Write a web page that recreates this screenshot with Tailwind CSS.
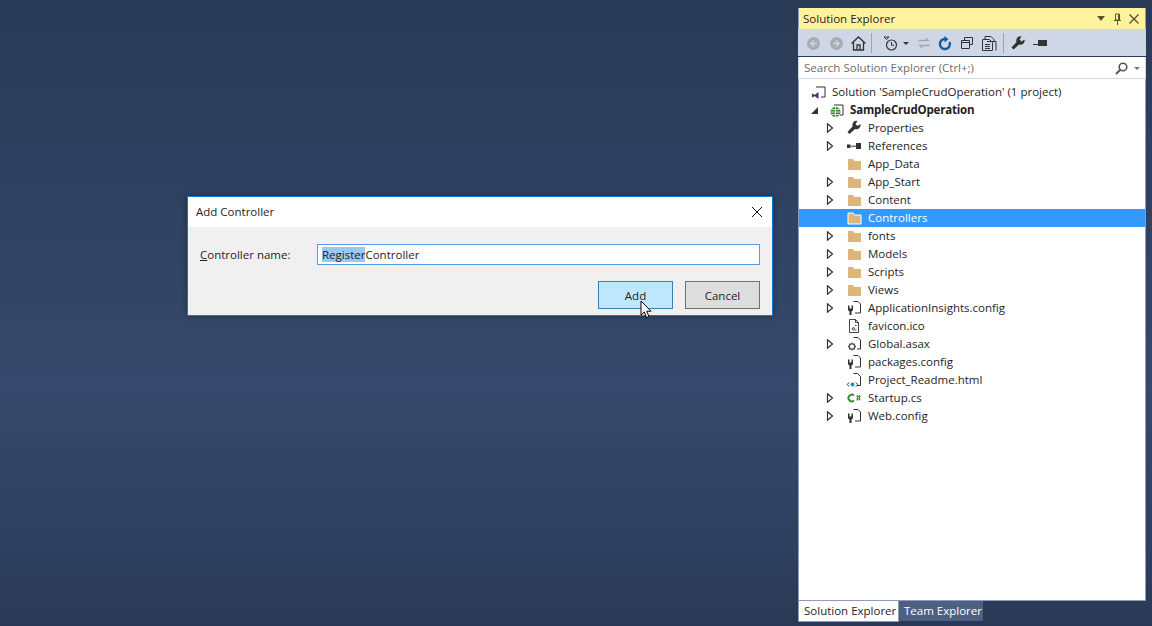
<!DOCTYPE html>
<html lang="en">
<head>
  <meta charset="UTF-8" />
  <title>Add Controller</title>
  <script src="https://cdn.jsdelivr.net/npm/@tailwindcss/browser@4"></script>
</head>
<body class="w-[1152px] h-[626px] overflow-hidden bg-[linear-gradient(to_bottom,#293a56_0%,#36496c_62%,#2f4161_85%,#293955_100%)] font-['Open_Sans',sans-serif] text-[11.5px] text-[#1e1e1e]">

<svg class="hidden">
  <symbol id="arrow" viewBox="0 0 8 10"><path d="M1.500 .8 6.500 5 1.500 9.200z" fill="#fff" stroke="#333" stroke-width="1.200"/></symbol>
  <symbol id="folder" viewBox="0 0 16 16"><path d="M2 3h5l1.500 2H15v9H2z" fill="#dcb67a"/></symbol>
  <symbol id="config" viewBox="0 0 16 16">
    <path d="M7.500 1.500h4.500l2.500 2.500v9H9" fill="none" stroke="#333"/>
    <path d="M2 5.500h1.500v3h2v-3H7v4a2 2 0 0 1-1.500 2V15h-2v-3.500A2 2 0 0 1 2 9.500z" fill="#333"/>
  </symbol>
</svg>

<div class="flex items-start">
  <!-- workspace -->
  <main class="w-[798px] pt-[196px] pl-[187px]">
    <div class="relative w-[586px] h-[120px] border border-[#0a7ad1] bg-[#f0f0f0] shadow-[0_0_6px_rgba(0,0,0,0.35)]">
      <div class="h-[30px] bg-white flex items-center justify-between pl-[8px] pr-[9px]">
        <span>Add Controller</span>
        <svg class="w-[12px] h-[12px]" viewBox="0 0 12 12"><path d="M1 1l10 10M11 1 1 11" stroke="#111" fill="none"/></svg>
      </div>
      <div class="flex items-center mt-[17px] pl-[12px]">
        <label class="w-[117px]"><span class="underline">C</span>ontroller name:</label>
        <div class="w-[443px] h-[21px] border border-[#569de5] bg-white flex items-center pl-[4px] leading-[15px]">
          <span class="bg-[#9bc8ef]">Register</span><span>Controller</span>
        </div>
      </div>
      <div class="flex justify-end gap-[12px] mt-[16px] pr-[12px]">
        <button class="w-[75px] h-[28px] pt-px border border-[#3c7fb1] bg-[#bee6fd]">Add</button>
        <button class="w-[75px] h-[28px] pt-px border border-[#707070] bg-[#dddddd]">Cancel</button>
      </div>
      <svg class="absolute left-[452px] top-[103px] w-[13px] h-[19px]" viewBox="0 0 13 19"><path d="M1 1v14l3.300-3 2.200 5.500 2.500-1-2.300-5.300H11z" fill="#fff" stroke="#000"/></svg>
    </div>
  </main>

  <!-- solution explorer -->
  <aside class="w-[348px] mt-[8px]">
    <div class="h-[21px] bg-[#fff29d] flex items-center pl-[4px] border-x border-[#8e9bbc]">
      <span class="flex-1">Solution Explorer</span>
      <svg class="w-[8px] h-[5px] mr-[8px]" viewBox="0 0 8 5"><path d="M0 0h8L4 5z" fill="#5a5430"/></svg>
      <svg class="w-[9px] h-[12px] mr-[7px]" viewBox="0 0 9 12"><path d="M2.500 1h4v6h-4zM1 7.500h7M4.500 8v4M5.500 1.500v5" stroke="#5a5430" fill="none"/></svg>
      <svg class="w-[10px] h-[10px] mr-[6px]" viewBox="0 0 10 10"><path d="M.5.500l9 9M9.500.500l-9 9" stroke="#5a5430" stroke-width="1.400" fill="none"/></svg>
    </div>
    <div class="h-[27px] pt-px bg-[#cfd6e5] flex items-center pl-[9px]">
      <svg class="w-[13px] h-[13px] mr-[10px]" viewBox="0 0 13 13"><circle cx="6.500" cy="6.500" r="6.500" fill="#a9acb1"/><path d="M7 3.500 4 6.500l3 3M4.500 6.500H10" stroke="#cfd6e5" stroke-width="1.500" fill="none"/></svg>
      <svg class="w-[13px] h-[13px] mr-[8px]" viewBox="0 0 13 13"><circle cx="6.500" cy="6.500" r="6.500" fill="#a9acb1"/><path d="M6 3.500l3 3-3 3M8.500 6.500H3" stroke="#cfd6e5" stroke-width="1.500" fill="none"/></svg>
      <svg class="w-[15px] h-[15px] mr-[5px]" viewBox="0 0 15 15"><path d="M.5 7.500 7.500 1l7 6.500M2.500 6.500v7.500h10V6.500M6 14V9h3v5" stroke="#333" stroke-width="1.300" fill="none"/></svg>
      <span class="w-px h-[20px] bg-[#9aa3b8] mr-[11px]"></span>
      <svg class="w-[15px] h-[15px] mr-[5px]" viewBox="0 0 15 15"><circle cx="8.500" cy="9" r="5" fill="none" stroke="#333" stroke-width="1.200"/><path d="M8.500 6v3.300h2.500M1 1h5L3.500 3.500z" fill="none" stroke="#333"/></svg>
      <svg class="w-[6px] h-[3px] mr-[9px]" viewBox="0 0 6 3"><path d="M0 0h6L3 3z" fill="#333"/></svg>
      <svg class="w-[12px] h-[12px] mr-[8px]" viewBox="0 0 12 12"><path d="M.5 3.500H10L7.500 1M11.500 8.500H2L4.500 11" stroke="#a3a7ad" stroke-width="1.400" fill="none"/></svg>
      <svg class="w-[14px] h-[15px] mr-[9px]" viewBox="0 0 14 15"><path d="M11.500 6A5 5 0 1 1 7 3" stroke="#0d5ea6" stroke-width="2.400" fill="none"/><path d="M6.500 0v6.500l4-3.200z" fill="#0d5ea6"/></svg>
      <svg class="w-[12px] h-[12px] mr-[9px]" viewBox="0 0 12 12"><path d="M3.500 3V.5h8v7H9M.5 3.500h8v8h-8zM.5 5.500h8" stroke="#333" fill="none"/></svg>
      <svg class="w-[15px] h-[15px] mr-[6px]" viewBox="0 0 15 15"><path d="M3 3V.5h6l3 3V5M.5 3.500h7l3 3v8h-10zM5 5.500h9v9M3 8.500h5M3 10.500h5M3 12.500h5" stroke="#333" fill="none"/></svg>
      <span class="w-px h-[20px] bg-[#9aa3b8] mr-[7px]"></span>
      <svg class="w-[14px] h-[14px] mr-[8px]" viewBox="0 0 14 14"><path d="M13.500 3.500 10.500 5.500 8.500 3.500l2-3A4.200 4.200 0 0 0 5.500 6L.5 11.500 2.500 13.500 8 8.500a4.200 4.200 0 0 0 5.500-5z" fill="#333"/></svg>
      <svg class="w-[14px] h-[6px]" viewBox="0 0 14 6"><path d="M0 4.500h5" stroke="#333" fill="none"/><path d="M5 0h9v6H5z" fill="#333"/></svg>
    </div>
    <div class="h-[22px] mt-px pt-px bg-white border-x border-b border-[#cfd6e5] flex items-center pl-[5px] text-[#6d6d6d]">
      <span class="flex-1">Search Solution Explorer (Ctrl+;)</span>
      <svg class="w-[13px] h-[13px] mr-[6px]" viewBox="0 0 13 13"><circle cx="8" cy="5" r="3.800" fill="none" stroke="#555" stroke-width="1.600"/><path d="M5.500 7.500 1 12" stroke="#555" stroke-width="2"/></svg>
      <svg class="w-[6px] h-[3px] mr-[5px]" viewBox="0 0 6 3"><path d="M0 0h6L3 3z" fill="#777"/></svg>
    </div>

    <div class="h-[522px] bg-white border border-[#8e9bbc] border-t-0 pt-[4px]">
      <div class="flex h-[18px] items-center pl-[12px]">
        <svg class="w-[16px] h-[16px]" viewBox="0 0 16 16"><path d="M5 3h9v10h-4" fill="none" stroke="#333"/><path d="M2 9.500l1.500 1.500L7.500 8v7l-4-3L2 13.500 1 13v-3z" fill="#68217a"/></svg>
        <span class="ml-[5px]">Solution 'SampleCrudOperation' (1 project)</span>
      </div>
      <div class="flex h-[18px] items-center pl-[12px]">
        <svg class="w-[7px] h-[7px]" viewBox="0 0 7 7"><path d="M7 0v7H0z" fill="#333"/></svg>
        <svg class="w-[16px] h-[16px] ml-[11px]" viewBox="0 0 16 16"><path d="M5 3h9v10h-3" fill="none" stroke="#333"/><circle cx="6.500" cy="10" r="5" fill="#388a34"/><path d="M1.500 10h10M6.500 5v10M2.500 7.500h8M2.500 12.500h8" stroke="#fff" stroke-width=".8"/></svg>
        <span class="ml-[5px] font-bold tracking-[-0.2px]">SampleCrudOperation</span>
      </div>
      <div class="flex h-[18px] items-center pl-[27px]">
        <svg class="w-[8px] h-[10px]"><use href="#arrow"/></svg>
        <svg class="w-[16px] h-[16px] ml-[12px]" viewBox="0 0 16 16"><path d="M14.500 4 11.500 6 9.500 4l2-3A4.200 4.200 0 0 0 6.500 6.500L1.500 12l2 2L9 9a4.200 4.200 0 0 0 5.500-5z" fill="#333"/></svg>
        <span class="ml-[6px]">Properties</span>
      </div>
      <div class="flex h-[18px] items-center pl-[27px]">
        <svg class="w-[8px] h-[10px]"><use href="#arrow"/></svg>
        <svg class="w-[16px] h-[16px] ml-[12px]" viewBox="0 0 16 16"><path d="M1 6.500h3.500v3.500H1zM10 5h5v6h-5z" fill="#333"/><path d="M5 8.200h5" stroke="#333"/></svg>
        <span class="ml-[6px]">References</span>
      </div>
      <div class="flex h-[18px] items-center pl-[47px]">
        <svg class="w-[16px] h-[16px]"><use href="#folder"/></svg>
        <span class="ml-[6px]">App_Data</span>
      </div>
      <div class="flex h-[18px] items-center pl-[27px]">
        <svg class="w-[8px] h-[10px]"><use href="#arrow"/></svg>
        <svg class="w-[16px] h-[16px] ml-[12px]"><use href="#folder"/></svg>
        <span class="ml-[6px]">App_Start</span>
      </div>
      <div class="flex h-[18px] items-center pl-[27px]">
        <svg class="w-[8px] h-[10px]"><use href="#arrow"/></svg>
        <svg class="w-[16px] h-[16px] ml-[12px]"><use href="#folder"/></svg>
        <span class="ml-[6px]">Content</span>
      </div>
      <div class="flex h-[18px] items-center pl-[47px] bg-[#3399ff] text-white">
        <svg class="w-[16px] h-[16px]" viewBox="0 0 16 16"><path d="M2 3h5l1.500 2H15v9H2z" fill="#dcb67a" stroke="#fff"/></svg>
        <span class="ml-[6px]">Controllers</span>
      </div>
      <div class="flex h-[18px] items-center pl-[27px]">
        <svg class="w-[8px] h-[10px]"><use href="#arrow"/></svg>
        <svg class="w-[16px] h-[16px] ml-[12px]"><use href="#folder"/></svg>
        <span class="ml-[6px]">fonts</span>
      </div>
      <div class="flex h-[18px] items-center pl-[27px]">
        <svg class="w-[8px] h-[10px]"><use href="#arrow"/></svg>
        <svg class="w-[16px] h-[16px] ml-[12px]"><use href="#folder"/></svg>
        <span class="ml-[6px]">Models</span>
      </div>
      <div class="flex h-[18px] items-center pl-[27px]">
        <svg class="w-[8px] h-[10px]"><use href="#arrow"/></svg>
        <svg class="w-[16px] h-[16px] ml-[12px]"><use href="#folder"/></svg>
        <span class="ml-[6px]">Scripts</span>
      </div>
      <div class="flex h-[18px] items-center pl-[27px]">
        <svg class="w-[8px] h-[10px]"><use href="#arrow"/></svg>
        <svg class="w-[16px] h-[16px] ml-[12px]"><use href="#folder"/></svg>
        <span class="ml-[6px]">Views</span>
      </div>
      <div class="flex h-[18px] items-center pl-[27px]">
        <svg class="w-[8px] h-[10px]"><use href="#arrow"/></svg>
        <svg class="w-[16px] h-[16px] ml-[12px]"><use href="#config"/></svg>
        <span class="ml-[6px]">ApplicationInsights.config</span>
      </div>
      <div class="flex h-[18px] items-center pl-[47px]">
        <svg class="w-[16px] h-[16px]" viewBox="0 0 16 16"><path d="M3.500 1.500h6l3 3v10h-9zM9.500 1.500v3h3" fill="none" stroke="#444"/><path d="M6 10.500l2-1 .5 1.500-1 1.500zM9 7.500h1.500M9 12h1.500" stroke="#444" fill="none"/></svg>
        <span class="ml-[6px]">favicon.ico</span>
      </div>
      <div class="flex h-[18px] items-center pl-[27px]">
        <svg class="w-[8px] h-[10px]"><use href="#arrow"/></svg>
        <svg class="w-[16px] h-[16px] ml-[12px]" viewBox="0 0 16 16"><path d="M7.500 1.500h4.500l2.500 2.500v9H11" fill="none" stroke="#333"/><path d="M6 6.500v8M2 10.500h8M3.200 7.700l5.600 5.600M8.800 7.700l-5.600 5.600" stroke="#555" stroke-width="1.300"/><circle cx="6" cy="10.500" r="2.700" fill="#fff" stroke="#555" stroke-width="1.300"/></svg>
        <span class="ml-[6px]">Global.asax</span>
      </div>
      <div class="flex h-[18px] items-center pl-[47px]">
        <svg class="w-[16px] h-[16px]"><use href="#config"/></svg>
        <span class="ml-[6px]">packages.config</span>
      </div>
      <div class="flex h-[18px] items-center pl-[47px]">
        <svg class="w-[16px] h-[16px]" viewBox="0 0 16 16"><path d="M7.500 1.500h4l3 3v9H11" fill="none" stroke="#333"/><circle cx="6.500" cy="12.500" r="2" fill="#1e88d9"/><path d="M3 10.500 1.300 12.500l1.700 2M10 10.500l1.700 2-1.700 2" fill="none" stroke="#333"/></svg>
        <span class="ml-[6px]">Project_Readme.html</span>
      </div>
      <div class="flex h-[18px] items-center pl-[27px]">
        <svg class="w-[8px] h-[10px]"><use href="#arrow"/></svg>
        <svg class="w-[16px] h-[16px] ml-[12px]" viewBox="0 0 16 16"><path d="M8 5.500A3.300 3.300 0 1 0 8 10.500" fill="none" stroke="#388a34" stroke-width="2"/><path d="M10.500 6.500h4M10.500 9h4M11.700 5l-.5 5.500M13.800 5l-.5 5.500" stroke="#388a34"/></svg>
        <span class="ml-[6px]">Startup.cs</span>
      </div>
      <div class="flex h-[18px] items-center pl-[27px]">
        <svg class="w-[8px] h-[10px]"><use href="#arrow"/></svg>
        <svg class="w-[16px] h-[16px] ml-[12px]"><use href="#config"/></svg>
        <span class="ml-[6px]">Web.config</span>
      </div>
    </div>

    <div class="flex whitespace-nowrap">
      <div class="h-[21px] w-[101px] pb-px bg-white border border-t-0 border-[#8e9bbc] flex items-center pl-[5px]">Solution Explorer</div>
      <div class="h-[20px] w-[84px] bg-[#4d6082] text-white flex items-center pl-[5px]">Team Explorer</div>
    </div>
  </aside>
</div>
</body>
</html>
